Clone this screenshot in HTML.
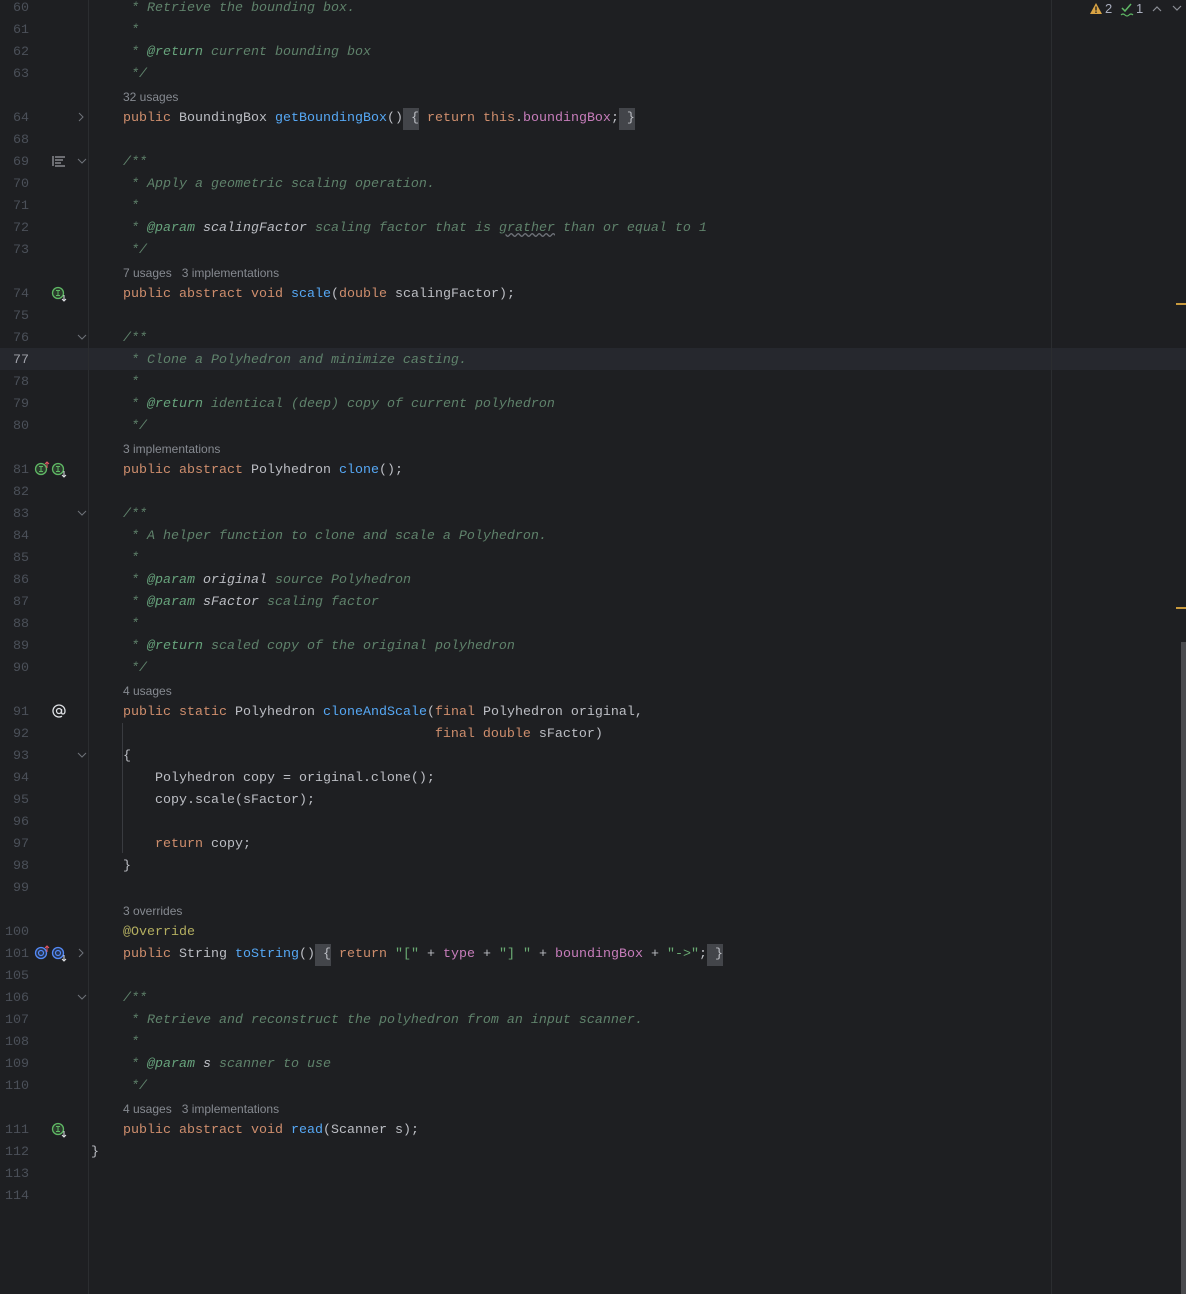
<!DOCTYPE html>
<html><head><meta charset="utf-8">
<style>
html,body{margin:0;padding:0;background:#1e1f22;width:1186px;height:1294px;overflow:hidden;position:relative}
#w{position:absolute;left:0;top:2px;width:1186px;height:1292px}
.ln{position:absolute;left:0;width:29px;text-align:right;font:13.33px "Liberation Mono",monospace;color:#4b5059;line-height:22px}
.code{position:absolute;left:91px;font:13.33px "Liberation Mono",monospace;color:#bcbec4;line-height:22px;white-space:pre}
.hint{position:absolute;left:123px;font:12px "Liberation Sans",sans-serif;color:#868a91;line-height:22px;white-space:pre}
.k{color:#cf8e6d}.f{color:#56a8f5}.fd{color:#c77dbb}.s{color:#6aab73}.an{color:#b3ae60}
.c{color:#5f826b;font-style:italic}.t{color:#67a37c;font-style:italic}.tp{color:#bcbec4;font-style:italic}
.br{background:#43454a;display:inline-block;height:22px;vertical-align:top}
.gico{position:absolute}
</style></head><body>
<div style="position:absolute;left:0;top:348px;width:1186px;height:22px;background:#26282e"></div>
<div style="position:absolute;left:88px;top:0;width:1px;height:1294px;background:#2b2d30"></div>
<div style="position:absolute;left:1051px;top:0;width:1px;height:1294px;background:#2b2d30"></div>
<div style="position:absolute;left:122px;top:723px;width:1px;height:130px;background:#393b40"></div>
<div style="position:absolute;left:1176px;top:303px;width:10px;height:2px;background:#c99a3d"></div>
<div style="position:absolute;left:1176px;top:607px;width:10px;height:2px;background:#c99a3d"></div>
<div style="position:absolute;left:1181px;top:642px;width:5px;height:652px;background:#4a4b4e"></div>

<svg style="position:absolute;left:1089px;top:2px" width="14" height="13" viewBox="0 0 14 13"><path d="M7 1L13 12H1Z" fill="#d9a343"/><rect x="6.3" y="4.5" width="1.4" height="4" fill="#1e1f22"/><rect x="6.3" y="9.5" width="1.4" height="1.4" fill="#1e1f22"/></svg>
<div style="position:absolute;left:1105px;top:0;font:13px 'Liberation Sans',sans-serif;color:#a8adbd;line-height:18px">2</div>
<svg style="position:absolute;left:1120px;top:3px" width="14" height="14" viewBox="0 0 14 14"><path d="M2 5L5 8L11 1" stroke="#5fb865" stroke-width="1.5" fill="none"/><path d="M1 12Q3 10 5 12T9 12T13 12" stroke="#5fb865" stroke-width="1.2" fill="none"/></svg>
<div style="position:absolute;left:1136px;top:0;font:13px 'Liberation Sans',sans-serif;color:#a8adbd;line-height:18px">1</div>
<svg style="position:absolute;left:1152px;top:5px" width="10" height="7"><path d="M1 6L5 2L9 6" stroke="#8c8f96" stroke-width="1.2" fill="none"/></svg>
<svg style="position:absolute;left:1172px;top:5px" width="10" height="7"><path d="M1 1L5 5L9 1" stroke="#8c8f96" stroke-width="1.2" fill="none"/></svg>

<div id="w">
<div class="ln" style="top:-4px">60</div>
<div class="ln" style="top:18px">61</div>
<div class="ln" style="top:40px">62</div>
<div class="ln" style="top:62px">63</div>
<div class="ln" style="top:106px">64</div>
<div class="ln" style="top:128px">68</div>
<div class="ln" style="top:150px">69</div>
<div class="ln" style="top:172px">70</div>
<div class="ln" style="top:194px">71</div>
<div class="ln" style="top:216px">72</div>
<div class="ln" style="top:238px">73</div>
<div class="ln" style="top:282px">74</div>
<div class="ln" style="top:304px">75</div>
<div class="ln" style="top:326px">76</div>
<div class="ln" style="top:348px;color:#a1a3ab">77</div>
<div class="ln" style="top:370px">78</div>
<div class="ln" style="top:392px">79</div>
<div class="ln" style="top:414px">80</div>
<div class="ln" style="top:458px">81</div>
<div class="ln" style="top:480px">82</div>
<div class="ln" style="top:502px">83</div>
<div class="ln" style="top:524px">84</div>
<div class="ln" style="top:546px">85</div>
<div class="ln" style="top:568px">86</div>
<div class="ln" style="top:590px">87</div>
<div class="ln" style="top:612px">88</div>
<div class="ln" style="top:634px">89</div>
<div class="ln" style="top:656px">90</div>
<div class="ln" style="top:700px">91</div>
<div class="ln" style="top:722px">92</div>
<div class="ln" style="top:744px">93</div>
<div class="ln" style="top:766px">94</div>
<div class="ln" style="top:788px">95</div>
<div class="ln" style="top:810px">96</div>
<div class="ln" style="top:832px">97</div>
<div class="ln" style="top:854px">98</div>
<div class="ln" style="top:876px">99</div>
<div class="ln" style="top:920px">100</div>
<div class="ln" style="top:942px">101</div>
<div class="ln" style="top:964px">105</div>
<div class="ln" style="top:986px">106</div>
<div class="ln" style="top:1008px">107</div>
<div class="ln" style="top:1030px">108</div>
<div class="ln" style="top:1052px">109</div>
<div class="ln" style="top:1074px">110</div>
<div class="ln" style="top:1118px">111</div>
<div class="ln" style="top:1140px">112</div>
<div class="ln" style="top:1162px">113</div>
<div class="ln" style="top:1184px">114</div>

<svg style="position:absolute;left:78px;top:110px" width="6" height="10"><path d="M1 1L5 5L1 9" stroke="#6f737a" fill="none"/></svg>
<svg style="position:absolute;left:77px;top:156px" width="10" height="6"><path d="M1 1L5 5L9 1" stroke="#6f737a" fill="none"/></svg>
<svg style="position:absolute;left:77px;top:332px" width="10" height="6"><path d="M1 1L5 5L9 1" stroke="#6f737a" fill="none"/></svg>
<svg style="position:absolute;left:77px;top:508px" width="10" height="6"><path d="M1 1L5 5L9 1" stroke="#6f737a" fill="none"/></svg>
<svg style="position:absolute;left:77px;top:750px" width="10" height="6"><path d="M1 1L5 5L9 1" stroke="#6f737a" fill="none"/></svg>
<svg style="position:absolute;left:78px;top:946px" width="6" height="10"><path d="M1 1L5 5L1 9" stroke="#6f737a" fill="none"/></svg>
<svg style="position:absolute;left:77px;top:992px" width="10" height="6"><path d="M1 1L5 5L9 1" stroke="#6f737a" fill="none"/></svg>

<svg style="position:absolute;left:52px;top:153px" width="14" height="12"><path d="M1 1V11M3 2H13M3 5H11M3 8H9M3 11H13" stroke="#bcbec4" stroke-width="1"/></svg>
<svg class="gico" style="left:51px;top:284px" width="16" height="16"><circle cx="7" cy="7" r="5.5" stroke="#5fb865" stroke-width="1.3" fill="#2a3a2c"/><path d="M5 4.5H9M7 4.5V9.5M5 9.5H9" stroke="#5fb865"/><path d="M13 9V15M11 13L13 15L15 13" stroke="#dfe1e5" fill="none"/></svg>
<svg class="gico" style="left:34px;top:459px" width="16" height="16"><circle cx="7" cy="8" r="5.5" stroke="#5fb865" stroke-width="1.3" fill="#2a3a2c"/><path d="M5 5.5H9M7 5.5V10.5M5 10.5H9" stroke="#5fb865"/><path d="M13 1V7M11 3L13 1L15 3" stroke="#e55765" fill="none"/></svg>
<svg class="gico" style="left:51px;top:460px" width="16" height="16"><circle cx="7" cy="7" r="5.5" stroke="#5fb865" stroke-width="1.3" fill="#2a3a2c"/><path d="M5 4.5H9M7 4.5V9.5M5 9.5H9" stroke="#5fb865"/><path d="M13 9V15M11 13L13 15L15 13" stroke="#dfe1e5" fill="none"/></svg>
<svg class="gico" style="left:51px;top:701px" width="16" height="16"><circle cx="8" cy="8" r="2.5" stroke="#dfe1e5" stroke-width="1.3" fill="none"/><path d="M10.5 6V9.5Q10.5 11 12 11Q14 11 14 8A6 6 0 1 0 11 13.2" stroke="#dfe1e5" stroke-width="1.3" fill="none"/></svg>
<svg class="gico" style="left:34px;top:943px" width="16" height="16"><circle cx="7" cy="8" r="5.5" stroke="#548af7" stroke-width="1.3" fill="#25324d"/><circle cx="7" cy="8" r="2.5" stroke="#548af7" stroke-width="1.2" fill="none"/><path d="M13 1V7M11 3L13 1L15 3" stroke="#e55765" fill="none"/></svg>
<svg class="gico" style="left:51px;top:944px" width="16" height="16"><circle cx="7" cy="7" r="5.5" stroke="#548af7" stroke-width="1.3" fill="#25324d"/><circle cx="7" cy="7" r="2.5" stroke="#548af7" stroke-width="1.2" fill="none"/><path d="M13 9V15M11 13L13 15L15 13" stroke="#dfe1e5" fill="none"/></svg>
<svg class="gico" style="left:51px;top:1120px" width="16" height="16"><circle cx="7" cy="7" r="5.5" stroke="#5fb865" stroke-width="1.3" fill="#2a3a2c"/><path d="M5 4.5H9M7 4.5V9.5M5 9.5H9" stroke="#5fb865"/><path d="M13 9V15M11 13L13 15L15 13" stroke="#dfe1e5" fill="none"/></svg>

<div class="code" style="top:-4px">    <span class="c"> * Retrieve the bounding box.</span></div>
<div class="code" style="top:18px">    <span class="c"> *</span></div>
<div class="code" style="top:40px">    <span class="c"> * </span><span class="t">@return</span><span class="c"> current bounding box</span></div>
<div class="code" style="top:62px">    <span class="c"> */</span></div>
<div class="hint" style="top:84px">32 usages</div>
<div class="code" style="top:106px">    <span class="k">public</span> BoundingBox <span class="f">getBoundingBox</span>()<span class="br"> {</span> <span class="k">return this</span>.<span class="fd">boundingBox</span>;<span class="br"> }</span></div>
<div class="code" style="top:150px">    <span class="c">/**</span></div>
<div class="code" style="top:172px">    <span class="c"> * Apply a geometric scaling operation.</span></div>
<div class="code" style="top:194px">    <span class="c"> *</span></div>
<div class="code" style="top:216px">    <span class="c"> * </span><span class="t">@param</span> <span class="tp">scalingFactor</span><span class="c"> scaling factor that is <span style="text-decoration:underline wavy #6f737a">grather</span> than or equal to 1</span></div>
<div class="code" style="top:238px">    <span class="c"> */</span></div>
<div class="hint" style="top:260px">7 usages   3 implementations</div>
<div class="code" style="top:282px">    <span class="k">public abstract void</span> <span class="f">scale</span>(<span class="k">double</span> scalingFactor);</div>
<div class="code" style="top:326px">    <span class="c">/**</span></div>
<div class="code" style="top:348px">    <span class="c"> * Clone a Polyhedron and minimize casting.</span></div>
<div class="code" style="top:370px">    <span class="c"> *</span></div>
<div class="code" style="top:392px">    <span class="c"> * </span><span class="t">@return</span><span class="c"> identical (deep) copy of current polyhedron</span></div>
<div class="code" style="top:414px">    <span class="c"> */</span></div>
<div class="hint" style="top:436px">3 implementations</div>
<div class="code" style="top:458px">    <span class="k">public abstract</span> Polyhedron <span class="f">clone</span>();</div>
<div class="code" style="top:502px">    <span class="c">/**</span></div>
<div class="code" style="top:524px">    <span class="c"> * A helper function to clone and scale a Polyhedron.</span></div>
<div class="code" style="top:546px">    <span class="c"> *</span></div>
<div class="code" style="top:568px">    <span class="c"> * </span><span class="t">@param</span> <span class="tp">original</span><span class="c"> source Polyhedron</span></div>
<div class="code" style="top:590px">    <span class="c"> * </span><span class="t">@param</span> <span class="tp">sFactor</span><span class="c"> scaling factor</span></div>
<div class="code" style="top:612px">    <span class="c"> *</span></div>
<div class="code" style="top:634px">    <span class="c"> * </span><span class="t">@return</span><span class="c"> scaled copy of the original polyhedron</span></div>
<div class="code" style="top:656px">    <span class="c"> */</span></div>
<div class="hint" style="top:678px">4 usages</div>
<div class="code" style="top:700px">    <span class="k">public static</span> Polyhedron <span class="f">cloneAndScale</span>(<span class="k">final</span> Polyhedron original,</div>
<div class="code" style="top:722px">                                           <span class="k">final double</span> sFactor)</div>
<div class="code" style="top:744px">    {</div>
<div class="code" style="top:766px">        Polyhedron copy = original.clone();</div>
<div class="code" style="top:788px">        copy.scale(sFactor);</div>
<div class="code" style="top:832px">        <span class="k">return</span> copy;</div>
<div class="code" style="top:854px">    }</div>
<div class="hint" style="top:898px">3 overrides</div>
<div class="code" style="top:920px">    <span class="an">@Override</span></div>
<div class="code" style="top:942px">    <span class="k">public</span> String <span class="f">toString</span>()<span class="br"> {</span> <span class="k">return</span> <span class="s">"["</span> + <span class="fd">type</span> + <span class="s">"] "</span> + <span class="fd">boundingBox</span> + <span class="s">"-&gt;"</span>;<span class="br"> }</span></div>
<div class="code" style="top:986px">    <span class="c">/**</span></div>
<div class="code" style="top:1008px">    <span class="c"> * Retrieve and reconstruct the polyhedron from an input scanner.</span></div>
<div class="code" style="top:1030px">    <span class="c"> *</span></div>
<div class="code" style="top:1052px">    <span class="c"> * </span><span class="t">@param</span> <span class="tp">s</span><span class="c"> scanner to use</span></div>
<div class="code" style="top:1074px">    <span class="c"> */</span></div>
<div class="hint" style="top:1096px">4 usages   3 implementations</div>
<div class="code" style="top:1118px">    <span class="k">public abstract void</span> <span class="f">read</span>(Scanner s);</div>
<div class="code" style="top:1140px">}</div>
</div>
</body></html>
